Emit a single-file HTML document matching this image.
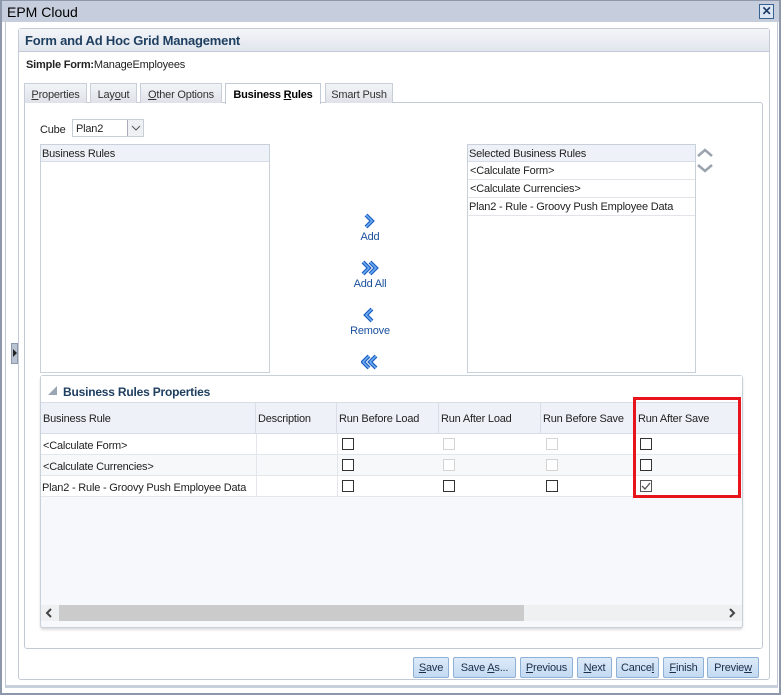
<!DOCTYPE html>
<html><head><style>
*{box-sizing:border-box;margin:0;padding:0}
body{width:781px;height:695px;position:relative;overflow:hidden;background:#fff;font-family:"Liberation Sans",sans-serif;font-size:11px;color:#222;letter-spacing:-0.2px}
.a{position:absolute}
.btn{position:absolute;top:657px;height:21px;border:1px solid #8fb1d6;background:linear-gradient(#dceaf8,#c3daf2);font-size:11px;color:#1a2d4a;text-align:center;line-height:21px;border-radius:2px}
.tab{position:absolute;top:83px;height:20px;border:1px solid #c8ced8;border-bottom:none;background:linear-gradient(#f2f4f7,#dfe3e9);font-size:11px;color:#333;line-height:22px;text-align:center}
.cb{position:absolute;width:12px;height:12px;border:1px solid #333;background:#fff}
.cb.d{border-color:#d4d4d4}
.th{position:absolute;top:402px;height:32px;line-height:34px;padding-left:2px;border-right:1px solid #d9dee6;font-size:11px}
.row{position:absolute;left:41px;width:700px;height:21px;border-bottom:1px solid #e3e6ea;line-height:24px;padding-left:2px}
.lab{color:#1a4f9c;font-size:11px;text-align:center;width:60px;left:340px}
.ic{position:absolute;left:361px}
</style></head><body>
<div class="a" style="left:0;top:0;width:781px;height:695px;border:2px solid #8d98ab;border-top:1px solid #8d98ab"></div>
<div class="a" style="left:2px;top:1px;width:777px;height:21px;background:#c6cddd;font-size:14px;line-height:23px;padding-left:5px;color:#000;letter-spacing:0">EPM Cloud</div>
<div class="a" style="left:759px;top:4px;width:15px;height:15px;border:1px solid #37618f;background:#dce6f3;color:#1d3c68;font-size:12px;line-height:13px;text-align:center;font-weight:bold">✕</div>
<div class="a" style="left:5px;top:22px;width:773px;height:666px;border-left:1px solid #c0c8d4;border-right:1px solid #c0c8d4;border-bottom:3px solid #c8d0dd"></div>
<div class="a" style="left:11px;top:343px;width:7px;height:21px;background:#b9c3d2;border:1px solid #8d98ab"></div>
<div class="a" style="left:13px;top:349px;width:0;height:0;border-left:4px solid #222;border-top:4px solid transparent;border-bottom:4px solid transparent"></div>
<div class="a" style="left:18px;top:28px;width:752px;height:652px;border:1px solid #c3cad5;border-radius:3px"></div>
<div class="a" style="left:19px;top:29px;width:750px;height:23px;background:linear-gradient(#f3f5f8,#e1e6ee);border-bottom:1px solid #c3cad5;font-weight:bold;font-size:13px;color:#1f3f60;line-height:24px;padding-left:6px">Form and Ad Hoc Grid Management</div>
<div class="a" style="left:26px;top:59px;font-size:11px"><b>Simple Form:</b>ManageEmployees</div>
<div class="a" style="left:24px;top:102px;width:739px;height:547px;border:1px solid #c3cad5;border-radius:0 3px 3px 3px"></div>
<div class="tab" style="left:24px;width:63px"><u>P</u>roperties</div>
<div class="tab" style="left:90px;width:47px">Lay<u>o</u>ut</div>
<div class="tab" style="left:140px;width:82px"><u>O</u>ther Options</div>
<div class="tab" style="left:225px;width:96px;background:#fff;height:21px;font-weight:bold;color:#000;border-color:#c3cad5">Business <u>R</u>ules</div>
<div class="tab" style="left:325px;width:68px">Smart Push</div>
<div class="a" style="left:40px;top:124px">Cube</div>
<div class="a" style="left:72px;top:119px;width:72px;height:18px;border:1px solid #c8ced6;padding-left:3px;line-height:19px">Plan2</div>
<div class="a" style="left:127px;top:120px;width:16px;height:16px;background:#eef0f3;border-left:1px solid #aab"><svg width="16" height="16"><path d="M4 6 L8 10 L12 6" stroke="#555" stroke-width="1" fill="none"/></svg></div>
<div class="a" style="left:40px;top:144px;width:230px;height:229px;border:1px solid #c8d0da"></div>
<div class="a" style="left:41px;top:145px;width:228px;height:17px;background:#eef1f7;border-bottom:1px solid #d6dde7;line-height:18px;padding-left:1px">Business Rules</div>
<div class="a" style="left:467px;top:144px;width:229px;height:229px;border:1px solid #c8d0da"></div>
<div class="a" style="left:468px;top:145px;width:227px;height:17px;background:#eef1f7;border-bottom:1px solid #d6dde7;line-height:18px;padding-left:1px">Selected Business Rules</div>
<div class="a" style="left:468px;top:162px;width:227px;height:18px;border-bottom:1px solid #e1e5ea;line-height:19px;padding-left:2px">&lt;Calculate Form&gt;</div>
<div class="a" style="left:468px;top:180px;width:227px;height:18px;border-bottom:1px solid #e1e5ea;line-height:19px;padding-left:2px">&lt;Calculate Currencies&gt;</div>
<div class="a" style="left:468px;top:198px;width:227px;height:18px;border-bottom:1px solid #e1e5ea;line-height:19px;padding-left:1px">Plan2 - Rule - Groovy Push Employee Data</div>
<svg class="a" style="left:697px;top:148px" width="16" height="26"><path d="M1 8 L8 2 L15 8" stroke="#9aa3ae" stroke-width="2.5" fill="none"/><path d="M1 17 L8 23 L15 17" stroke="#9aa3ae" stroke-width="2.5" fill="none"/></svg>
<svg class="ic" style="top:213px" width="18" height="16"><path d="M5 2 L11 8 L5 14" stroke="#1f5fc0" stroke-width="4" fill="none"/><path d="M5 2 L11 8 L5 14" stroke="#6fb0f5" stroke-width="1.5" fill="none"/></svg>
<div class="a lab" style="top:231px">Add</div>
<svg class="ic" style="top:260px" width="18" height="16"><path d="M2 2 L8 8 L2 14 M9 2 L15 8 L9 14" stroke="#1f5fc0" stroke-width="4" fill="none"/><path d="M2 2 L8 8 L2 14 M9 2 L15 8 L9 14" stroke="#6fb0f5" stroke-width="1.5" fill="none"/></svg>
<div class="a lab" style="top:278px">Add All</div>
<svg class="ic" style="top:307px" width="18" height="16"><path d="M11 2 L5 8 L11 14" stroke="#1f5fc0" stroke-width="4" fill="none"/><path d="M11 2 L5 8 L11 14" stroke="#6fb0f5" stroke-width="1.5" fill="none"/></svg>
<div class="a lab" style="top:325px">Remove</div>
<svg class="ic" style="top:354px" width="18" height="16"><path d="M8 2 L2 8 L8 14 M15 2 L9 8 L15 14" stroke="#1f5fc0" stroke-width="4" fill="none"/><path d="M8 2 L2 8 L8 14 M15 2 L9 8 L15 14" stroke="#6fb0f5" stroke-width="1.5" fill="none"/></svg>
<div class="a" style="left:40px;top:375px;width:703px;height:253px;border:1px solid #c8d0da;border-radius:3px;box-shadow:0 2px 2px #ddd;background:#f7f8fb"></div>
<div class="a" style="left:41px;top:376px;width:701px;height:26px;background:#fff"></div>
<div class="a" style="left:48px;top:386px;width:0;height:0;border-right:9px solid #9aa6b4;border-top:9px solid transparent"></div>
<div class="a" style="left:63px;top:385px;font-weight:bold;font-size:12px;color:#1f3f60">Business Rules Properties</div>
<div class="a" style="left:41px;top:402px;width:700px;height:32px;background:#eef1f7;border-top:1px solid #d6dde7;border-bottom:1px solid #d6dde7"></div>
<div class="th" style="left:41px;width:215px">Business Rule</div>
<div class="th" style="left:256px;width:81px">Description</div>
<div class="th" style="left:337px;width:102px">Run Before Load</div>
<div class="th" style="left:439px;width:102px">Run After Load</div>
<div class="th" style="left:541px;width:95px">Run Before Save</div>
<div class="th" style="left:636px;width:105px">Run After Save</div>
<div class="row" style="top:434px;background:#fff">&lt;Calculate Form&gt;</div>
<div class="row" style="top:455px;background:#f7f8fa">&lt;Calculate Currencies&gt;</div>
<div class="row" style="top:476px;background:#fff;padding-left:1px">Plan2 - Rule - Groovy Push Employee Data</div>
<div class="a" style="left:256px;top:434px;width:1px;height:63px;background:#e3e6ea"></div>
<div class="a" style="left:337px;top:434px;width:1px;height:63px;background:#e3e6ea"></div>
<div class="cb" style="left:342px;top:438px"></div><div class="cb d" style="left:443px;top:438px"></div><div class="cb d" style="left:546px;top:438px"></div><div class="cb" style="left:640px;top:438px"></div>
<div class="cb" style="left:342px;top:459px"></div><div class="cb d" style="left:443px;top:459px"></div><div class="cb d" style="left:546px;top:459px"></div><div class="cb" style="left:640px;top:459px"></div>
<div class="cb" style="left:342px;top:480px"></div><div class="cb" style="left:443px;top:480px"></div><div class="cb" style="left:546px;top:480px"></div>
<div class="cb" style="left:640px;top:480px;border-color:#555"><svg width="10" height="10" style="position:absolute;left:0;top:0"><path d="M1 5 L4 8 L9 2" stroke="#555" stroke-width="1.3" fill="none"/></svg></div>
<div class="a" style="left:633px;top:397px;width:108px;height:101px;border:3px solid #e8141c"></div>
<div class="a" style="left:41px;top:605px;width:701px;height:16px;background:#eef0f2"></div>
<div class="a" style="left:59px;top:605px;width:465px;height:16px;background:#cbcbcb"></div>
<svg class="a" style="left:44px;top:608px" width="10" height="10"><path d="M7 1 L3 5 L7 9" stroke="#444" stroke-width="2" fill="none"/></svg>
<svg class="a" style="left:727px;top:608px" width="10" height="10"><path d="M3 1 L7 5 L3 9" stroke="#444" stroke-width="2" fill="none"/></svg>
<div class="btn" style="left:413px;width:36px"><u>S</u>ave</div>
<div class="btn" style="left:453px;width:63px">Save <u>A</u>s...</div>
<div class="btn" style="left:520px;width:53px"><u>P</u>revious</div>
<div class="btn" style="left:577px;width:35px"><u>N</u>ext</div>
<div class="btn" style="left:616px;width:43px">Cance<u>l</u></div>
<div class="btn" style="left:663px;width:41px"><u>F</u>inish</div>
<div class="btn" style="left:707px;width:52px">Previe<u>w</u></div>
</body></html>
